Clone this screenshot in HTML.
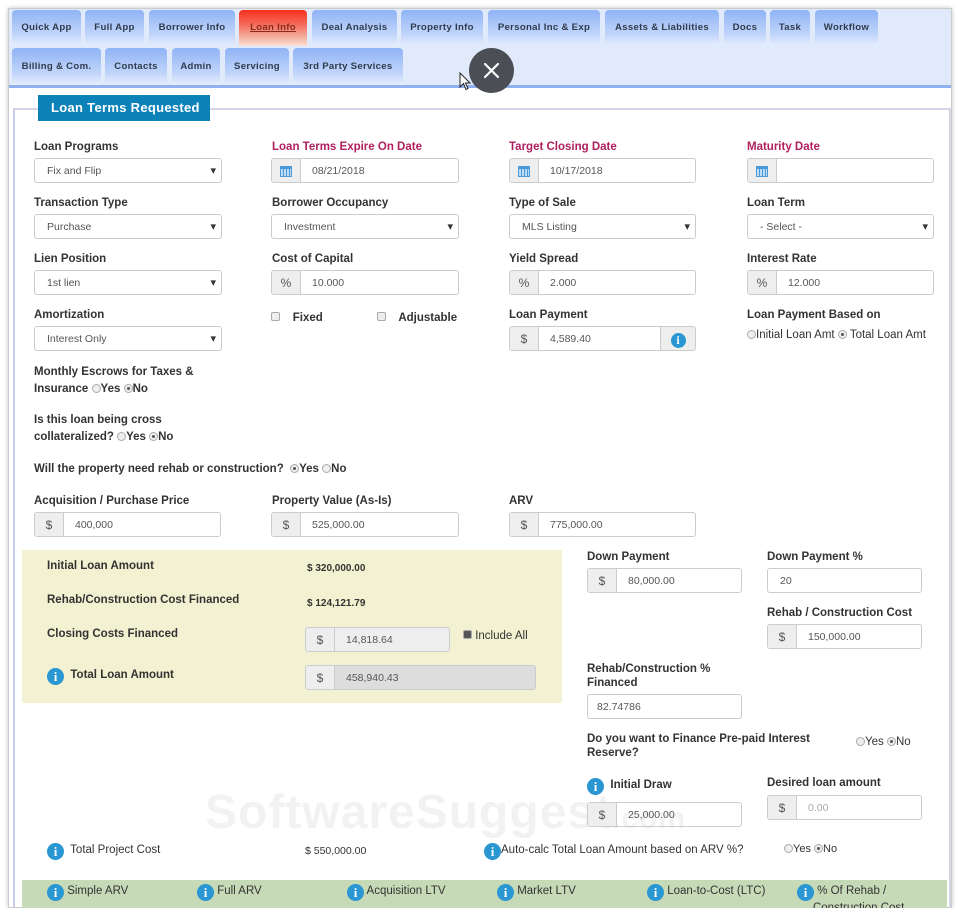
<!DOCTYPE html>
<html style="width:960px;height:913px;overflow:hidden"><head><meta charset="utf-8">
<style>
*{box-sizing:border-box;margin:0;padding:0}
body{width:960px;height:913px;background:#fff;font-family:"Liberation Sans",Arial,sans-serif;position:relative;overflow:hidden;color:#333}
.a{position:absolute}
#frame{left:8px;top:8px;width:944px;height:900px;border:1px solid #ccc;box-shadow:0 0 4px rgba(0,0,0,.25);background:#fff}
#bar{left:9px;top:9px;width:942px;height:79px;background:#e0eafb;border-bottom:3px solid #8fb1f0}
.tab{position:absolute;height:36px;border-radius:4px 4px 0 0;background:linear-gradient(#8fb3f5,#c3d6fb 70%,#e6eefd);font-size:9.6px;font-weight:bold;letter-spacing:.3px;color:#2f3b4c;text-align:center;line-height:36px}
.tab.on{background:linear-gradient(#f8301c,#f46a5a 40%,#f6b9a8 80%,#fbe1d6);color:#8b2a1a;text-decoration:underline}
#close{left:469px;top:48px;width:45px;height:45px;border-radius:50%;background:#4b4e54}
#panel{left:13px;top:108px;width:938px;height:800px;border:2px solid #d3d6e6;border-left-color:#c7cdf0;border-bottom:none}
#hd{left:38px;top:95px;width:172px;height:26px;background:#0d82b8;color:#fff;font-weight:bold;font-size:13px;line-height:26px;padding-left:13px;letter-spacing:.3px}
.l{position:absolute;font-size:11.5px;font-weight:bold;color:#333;line-height:14px}
.r{color:#b0205e}
.in{position:absolute;height:25px;border:1px solid #ccc;border-radius:3px;background:#fff;font-size:10.5px;color:#555;line-height:24px;padding-left:12px;overflow:hidden}
.sel::after{content:"▾";position:absolute;right:5px;top:0;font-size:11px;color:#333}
.ad{position:absolute;left:0;top:0;bottom:0;width:29px;background:#eee;border-right:1px solid #ccc;text-align:center;color:#555;font-size:12px}
.in.g{padding-left:40px}
.rd{display:inline-block;width:9px;height:9px;border:1px solid #aaa;border-radius:50%;background:#eee;vertical-align:-1px;position:relative}
.rd.c::after{content:"";position:absolute;left:2px;top:2px;width:3px;height:3px;border-radius:50%;background:#555}
.cb{display:inline-block;width:9px;height:9px;border:1px solid #aaa;border-radius:2px;background:#eee;vertical-align:0}
.i{display:inline-block;width:17px;height:17px;border-radius:50%;background:#2a96d2;color:#fff;font:bold 13px/17px "Liberation Serif",serif;text-align:center;vertical-align:-3px}
.cal{display:inline-block;width:12px;height:11px;border:1px solid #4a9ad8;border-top-width:3px;background:repeating-linear-gradient(90deg,#bcdaf2 0 2px,#4a9ad8 2px 3px);margin-top:7px}
#yel{left:22px;top:550px;width:540px;height:153px;background:#f2f1d1}
#grn{left:22px;top:880px;width:925px;height:28px;background:#c7dab8}
.v{position:absolute;font-size:10px;font-weight:bold;color:#333}
#wm{left:205px;top:785px;font-size:48px;font-weight:bold;color:rgba(0,0,0,.05);letter-spacing:1px}
</style></head><body>
<div id="frame" class="a"></div>
<div id="bar" class="a"></div>
<div class="tab" style="left:12px;top:10px;width:69px">Quick App</div>
<div class="tab" style="left:85px;top:10px;width:59px">Full App</div>
<div class="tab" style="left:149px;top:10px;width:86px">Borrower Info</div>
<div class="tab on" style="left:239px;top:10px;width:68px">Loan Info</div>
<div class="tab" style="left:312px;top:10px;width:85px">Deal Analysis</div>
<div class="tab" style="left:401px;top:10px;width:82px">Property Info</div>
<div class="tab" style="left:488px;top:10px;width:112px">Personal Inc &amp; Exp</div>
<div class="tab" style="left:605px;top:10px;width:114px">Assets &amp; Liabilities</div>
<div class="tab" style="left:724px;top:10px;width:42px">Docs</div>
<div class="tab" style="left:770px;top:10px;width:40px">Task</div>
<div class="tab" style="left:815px;top:10px;width:63px">Workflow</div>
<div class="tab" style="left:12px;top:48px;width:89px;height:37px;line-height:37px">Billing &amp; Com.</div>
<div class="tab" style="left:105px;top:48px;width:62px;height:37px;line-height:37px">Contacts</div>
<div class="tab" style="left:172px;top:48px;width:48px;height:37px;line-height:37px">Admin</div>
<div class="tab" style="left:225px;top:48px;width:64px;height:37px;line-height:37px">Servicing</div>
<div class="tab" style="left:293px;top:48px;width:110px;height:37px;line-height:37px">3rd Party Services</div>
<svg class="a" style="left:459px;top:72px" width="14" height="20" viewBox="0 0 14 20"><path d="M1 1 L1 15 L4.5 11.5 L7 17.5 L9 16.5 L6.5 11 L11 11 Z" fill="#fff" stroke="#222" stroke-width="1"/></svg>
<div id="close" class="a"><svg width="45" height="45" viewBox="0 0 45 45"><path d="M16 16 L29 29 M29 16 L16 29" stroke="#fff" stroke-width="2.2" stroke-linecap="round"/></svg></div>

<div id="panel" class="a"></div>
<div id="hd" class="a">Loan Terms Requested</div>

<div class="l" style="left:34px;top:140px">Loan Programs</div>
<div class="in sel" style="left:34px;top:158px;width:188px">Fix and Flip</div>
<div class="l r" style="left:272px;top:140px">Loan Terms Expire On Date</div>
<div class="in g" style="left:271px;top:158px;width:188px"><span class="ad"><span class="cal"></span></span>08/21/2018</div>
<div class="l r" style="left:509px;top:140px">Target Closing Date</div>
<div class="in g" style="left:509px;top:158px;width:187px"><span class="ad"><span class="cal"></span></span>10/17/2018</div>
<div class="l r" style="left:747px;top:140px">Maturity Date</div>
<div class="in g" style="left:747px;top:158px;width:187px"><span class="ad"><span class="cal"></span></span></div>

<div class="l" style="left:34px;top:196px">Transaction Type</div>
<div class="in sel" style="left:34px;top:214px;width:188px">Purchase</div>
<div class="l" style="left:272px;top:196px">Borrower Occupancy</div>
<div class="in sel" style="left:271px;top:214px;width:188px">Investment</div>
<div class="l" style="left:509px;top:196px">Type of Sale</div>
<div class="in sel" style="left:509px;top:214px;width:187px">MLS Listing</div>
<div class="l" style="left:747px;top:196px">Loan Term</div>
<div class="in sel" style="left:747px;top:214px;width:187px">- Select -</div>

<div class="l" style="left:34px;top:252px">Lien Position</div>
<div class="in sel" style="left:34px;top:270px;width:188px">1st lien</div>
<div class="l" style="left:272px;top:252px">Cost of Capital</div>
<div class="in g" style="left:271px;top:270px;width:188px"><span class="ad">%</span>10.000</div>
<div class="l" style="left:509px;top:252px">Yield Spread</div>
<div class="in g" style="left:509px;top:270px;width:187px"><span class="ad">%</span>2.000</div>
<div class="l" style="left:747px;top:252px">Interest Rate</div>
<div class="in g" style="left:747px;top:270px;width:187px"><span class="ad">%</span>12.000</div>

<div class="l" style="left:34px;top:308px">Amortization</div>
<div class="in sel" style="left:34px;top:326px;width:188px">Interest Only</div>
<div class="l" style="left:271px;top:311px"><span class="cb"></span>&nbsp;&nbsp;&nbsp; Fixed</div>
<div class="l" style="left:377px;top:311px"><span class="cb"></span>&nbsp;&nbsp;&nbsp; Adjustable</div>
<div class="l" style="left:509px;top:308px">Loan Payment</div>
<div class="in g" style="left:509px;top:326px;width:187px"><span class="ad">$</span>4,589.40<span class="a" style="right:0;top:0;bottom:0;width:35px;background:#eee;border-left:1px solid #ccc;text-align:center;line-height:23px"><span class="i" style="width:15px;height:15px;line-height:15px;font-size:12px">i</span></span></div>
<div class="l" style="left:747px;top:308px">Loan Payment Based on</div>
<div class="a" style="left:747px;top:329px;font-size:11.5px;color:#333"><span class="rd"></span>Initial Loan Amt <span class="rd c"></span> Total Loan Amt</div>

<div class="l" style="left:34px;top:364px;line-height:17px">Monthly Escrows for Taxes &amp;<br>Insurance <span class="rd"></span>Yes <span class="rd c"></span>No</div>
<div class="l" style="left:34px;top:412px;line-height:17px">Is this loan being cross<br>collateralized? <span class="rd"></span>Yes <span class="rd c"></span>No</div>
<div class="l" style="left:34px;top:462px">Will the property need rehab or construction? &nbsp;<span class="rd c"></span>Yes <span class="rd"></span>No</div>

<div class="l" style="left:34px;top:494px">Acquisition / Purchase Price</div>
<div class="in g" style="left:34px;top:512px;width:187px"><span class="ad">$</span>400,000</div>
<div class="l" style="left:272px;top:494px">Property Value (As-Is)</div>
<div class="in g" style="left:271px;top:512px;width:188px"><span class="ad">$</span>525,000.00</div>
<div class="l" style="left:509px;top:494px">ARV</div>
<div class="in g" style="left:509px;top:512px;width:187px"><span class="ad">$</span>775,000.00</div>

<div id="yel" class="a"></div>
<div class="l" style="left:47px;top:559px">Initial Loan Amount</div>
<div class="v" style="left:307px;top:563px">$ 320,000.00</div>
<div class="l" style="left:47px;top:593px">Rehab/Construction Cost Financed</div>
<div class="v" style="left:307px;top:598px">$ 124,121.79</div>
<div class="l" style="left:47px;top:627px">Closing Costs Financed</div>
<div class="in g" style="left:305px;top:627px;width:145px;background:#eee"><span class="ad">$</span>14,818.64</div>
<div class="a" style="left:463px;top:630px;font-size:11.5px"><span class="cb" style="background:#555"></span> Include All</div>
<div class="l" style="left:47px;top:668px"><span class="i">i</span>&nbsp; Total Loan Amount</div>
<div class="in g" style="left:305px;top:665px;width:231px;background:#ddd"><span class="ad">$</span>458,940.43</div>

<div class="l" style="left:587px;top:550px">Down Payment</div>
<div class="in g" style="left:587px;top:568px;width:155px"><span class="ad">$</span>80,000.00</div>
<div class="l" style="left:767px;top:550px">Down Payment %</div>
<div class="in" style="left:767px;top:568px;width:155px">20</div>
<div class="l" style="left:767px;top:606px">Rehab / Construction Cost</div>
<div class="in g" style="left:767px;top:624px;width:155px"><span class="ad">$</span>150,000.00</div>
<div class="l" style="left:587px;top:662px">Rehab/Construction %<br>Financed</div>
<div class="in" style="left:587px;top:694px;width:155px;padding-left:9px">82.74786</div>
<div class="l" style="left:587px;top:732px">Do you want to Finance Pre-paid Interest<br>Reserve?</div>
<div class="a" style="left:856px;top:736px;font-size:11.5px"><span class="rd"></span>Yes <span class="rd c"></span>No</div>
<div class="l" style="left:587px;top:778px"><span class="i">i</span>&nbsp; Initial Draw</div>
<div class="l" style="left:767px;top:776px">Desired loan amount</div>
<div class="in g" style="left:767px;top:795px;width:155px;color:#aaa"><span class="ad">$</span>0.00</div>

<div id="wm" class="a">SoftwareSuggest<span style="font-size:30px">.com</span></div>
<div class="in g" style="left:587px;top:802px;width:155px;background:transparent"><span class="ad">$</span>25,000.00</div>

<div class="l" style="left:47px;top:843px;font-weight:normal"><span class="i">i</span>&nbsp; Total Project Cost</div>
<div class="v" style="left:305px;top:845px;font-weight:normal;font-size:10.5px">$ 550,000.00</div>
<div class="l" style="left:484px;top:843px;font-weight:normal"><span class="i">i</span>Auto-calc Total Loan Amount based on ARV %?</div>
<div class="a" style="left:784px;top:843px;font-size:11px"><span class="rd"></span>Yes <span class="rd c"></span>No</div>

<div id="grn" class="a"></div>
<div class="l" style="left:47px;top:884px;font-weight:normal"><span class="i">i</span> Simple ARV</div>
<div class="l" style="left:197px;top:884px;font-weight:normal"><span class="i">i</span> Full ARV</div>
<div class="l" style="left:347px;top:884px;font-weight:normal"><span class="i">i</span> Acquisition LTV</div>
<div class="l" style="left:497px;top:884px;font-weight:normal"><span class="i">i</span> Market LTV</div>
<div class="l" style="left:647px;top:884px;font-weight:normal"><span class="i">i</span> Loan-to-Cost (LTC)</div>
<div class="l" style="left:797px;top:884px;font-weight:normal"><span class="i">i</span> % Of Rehab /<br>&nbsp;&nbsp;&nbsp;&nbsp;&nbsp;Construction Cost</div>
<div class="a" style="left:0;top:908px;width:960px;height:5px;background:#fff"></div>
</body></html>
